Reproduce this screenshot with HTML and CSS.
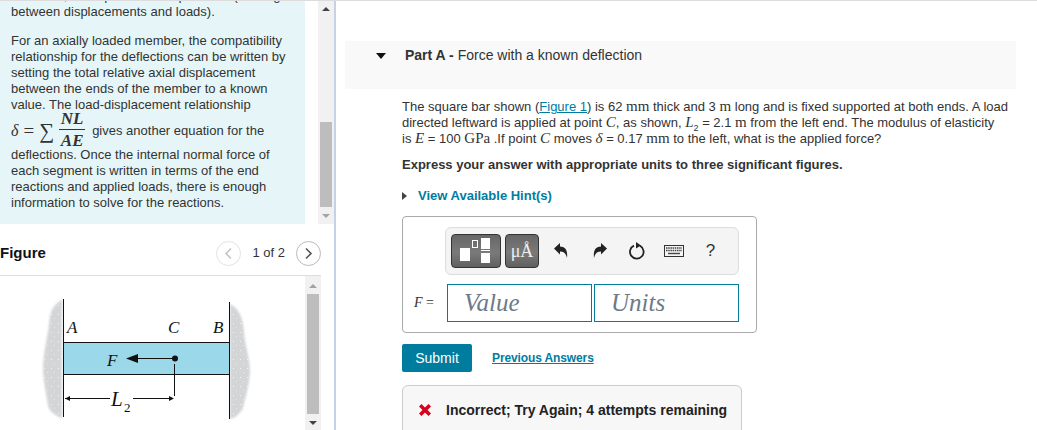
FILE: index.html
```html
<!DOCTYPE html>
<html lang="en">
<head>
  <meta charset="UTF-8">
  <title>Part A - Force with a known deflection</title>
  <link rel="stylesheet" href="styles.css">
</head>
<body>
  <div class="page">
    <div class="left-pane">
      <div class="intro">
        <div class="intro-text">
          <p class="clipped-line">reactions, the equations of equilibrium (relating</p>
          <p>between displacements and loads).</p>
          <p class="gap-above">For an axially loaded member, the compatibility relationship for the deflections can be written by setting the total relative axial displacement between the ends of the member to a known value. The load-displacement relationship</p>
          <div class="formula-line">
            <i class="formula delta">δ</i>
            <span class="formula equals">=</span>
            <span class="formula sigma">∑</span>
            <span class="fraction"><i>NL</i><i class="denominator">AE</i></span>
            <span>gives another equation for the</span>
          </div>
          <p>deflections. Once the internal normal force of each segment is written in terms of the end reactions and applied loads, there is enough information to solve for the reactions.</p>
        </div>
        <div class="scrollbar intro-scroll">
          <span class="arrow-up dark"></span>
          <div class="track"><div class="thumb intro-thumb"></div></div>
          <span class="arrow-down"></span>
        </div>
      </div>

      <div class="figure-head">
        <h2>Figure</h2>
        <div class="pager">
          <span class="round-btn off"><svg width="9" height="13" viewBox="0 0 9 13"><path d="M7 1.500 2 6.500 7 11.500" fill="none" stroke="#c4c4c4" stroke-width="1.600"/></svg></span>
          <span class="pager-text">1 of 2</span>
          <span class="round-btn"><svg width="9" height="13" viewBox="0 0 9 13"><path d="M2 1.500 7 6.500 2 11.500" fill="none" stroke="#555" stroke-width="1.600"/></svg></span>
        </div>
      </div>
      <div class="figure-body">
        <svg class="diagram" width="305" height="154" viewBox="0 0 305 154">
          <defs>
            <pattern id="speck" width="7" height="9" patternUnits="userSpaceOnUse">
              <rect x="2" y="2" width="1" height="1" fill="#f4f4f4"/>
              <rect x="5" y="6" width="1" height="1" fill="#e6e6e6"/>
            </pattern>
          </defs>
          <g class="stone">
            <path d="M62 24 C54 28 50 34 49 48 C48 60 43 76 43 94 C44 112 47 120 48 130 C50 136 56 140 62 142Z" fill="#d3d5d7"/>
            <path d="M230 28 C238 32 243 40 244 56 C245 70 250 82 250 96 C249 112 245 122 243 132 C240 138 235 142 230 143Z" fill="#d3d5d7"/>
          </g>
          <path d="M62 24 C54 28 50 34 49 48 C48 60 43 76 43 94 C44 112 47 120 48 130 C50 136 56 140 62 142Z" fill="url(#speck)"/>
          <path d="M230 28 C238 32 243 40 244 56 C245 70 250 82 250 96 C249 112 245 122 243 132 C240 138 235 142 230 143Z" fill="url(#speck)"/>
          <rect x="63.500" y="66.500" width="166" height="32" fill="#9ad8ea" stroke="#111"/>
          <path d="M63.500 23V141M229.500 26V143" stroke="#111"/>
          <g class="fig-label">
            <text x="67" y="57">A</text>
            <text x="168" y="57">C</text>
            <text x="213" y="57">B</text>
            <text x="107" y="90">F</text>
            <text x="111" y="130" class="big">L</text>
            <text x="124" y="136" class="sub">2</text>
          </g>
          <path d="M135 82.500H175" stroke="#111"/>
          <path d="M126 82.500 138 78V87Z" fill="#111"/>
          <circle cx="175" cy="82.500" r="3" fill="#111"/>
          <path d="M174.500 88V120" stroke="#111"/>
          <path d="M65 122.500H110M133 122.500H173" stroke="#111"/>
          <path d="M65 122.500 70 120V125ZM174 122.500 169 120V125Z" fill="#111"/>
        </svg>
        <div class="scrollbar fig-scroll">
          <span class="arrow-up"></span>
          <div class="track"><div class="thumb fig-thumb"></div></div>
          <span class="arrow-down dark"></span>
        </div>
      </div>
    </div>

    <div class="right-pane">
      <div class="part-head">
        <span class="arrow-down black"></span>
        <span><b>Part A -</b> Force with a known deflection</span>
      </div>
      <div class="part-body">
        <p>The square bar shown (<a href="#">Figure 1</a>) is 62 <span class="unit">mm</span> thick and 3 <span class="unit">m</span> long and is fixed supported at both ends. A load directed leftward is applied at point <i class="var">C</i>, as shown, <i class="var">L</i><sub>2</sub> = 2.1 <span class="unit">m</span> from the left end. The modulus of elasticity <span class="nowrap">is <i class="var">E</i></span> = 100 <span class="unit">GPa</span> .If point <i class="var">C</i> moves <i class="var">δ</i> = 0.17 <span class="unit">mm</span> to the left, what is the applied force?</p>
        <p class="instruction">Express your answer with appropriate units to three significant figures.</p>
        <div class="hints"><span class="arrow-right"></span><a href="#">View Available Hint(s)</a></div>

        <div class="answer-box">
          <div class="toolbar">
            <span class="tool-btn templates">
              <svg width="47" height="32" viewBox="0 0 47 32">
                <rect x="7" y="13" width="10" height="13" fill="#fff"/>
                <rect x="19.500" y="5.500" width="5" height="7" fill="none" stroke="#fff"/>
                <rect x="28" y="3" width="9" height="11" fill="#fff"/>
                <rect x="28" y="15" width="9" height="1" fill="#fff"/>
                <rect x="28" y="18" width="9" height="10" fill="#fff"/>
              </svg>
            </span>
            <span class="tool-btn symbols">μÅ</span>
            <span class="tool-icon">
              <svg width="14" height="16" viewBox="0 0 14 16"><path d="M0 5.500 6 0V3.500C11 3.500 14 7 13 15 12 10.500 10 8.500 6 8.500V11.500Z" fill="#222"/></svg>
            </span>
            <span class="tool-icon redo">
              <svg width="14" height="16" viewBox="0 0 14 16"><path d="M14 5.500 8 0V3.500C3 3.500 0 7 1 15 2 10.500 4 8.500 8 8.500V11.500Z" fill="#222"/></svg>
            </span>
            <span class="tool-icon">
              <svg width="18" height="18" viewBox="0 0 18 18"><path d="M12 3.800A6.800 6.800 0 1 1 6 3.600" fill="none" stroke="#222" stroke-width="1.800"/><path d="M8 0V6.500L13 3.500Z" fill="#222"/></svg>
            </span>
            <span class="tool-icon">
              <svg width="20" height="12" viewBox="0 0 20 12"><rect x=".5" y=".5" width="19" height="11" fill="none" stroke="#333"/><path d="M2 3H18M2 5.500H18" stroke="#444" stroke-dasharray="1.500 .7" stroke-width="1.400"/><path d="M4 8.500H16" stroke="#444" stroke-width="1.400"/></svg>
            </span>
            <span class="tool-icon help">?</span>
          </div>
          <div class="answer-row">
            <span class="answer-label"><i>F</i> =</span>
            <span class="answer-input">Value</span>
            <span class="answer-input">Units</span>
          </div>
        </div>

        <div class="submit-row">
          <button class="submit-btn">Submit</button>
          <a href="#" class="prev-link">Previous Answers</a>
        </div>

        <div class="feedback">
          <svg width="14" height="14" viewBox="0 0 14 14"><path d="M1 3.500 3.500 1 7 4.500 10.500 1 13 3.500 9.500 7 13 10.500 10.500 13 7 9.500 3.500 13 1 10.500 4.500 7Z" fill="#d9001b"/></svg>
          <span>Incorrect; Try Again; 4 attempts remaining</span>
        </div>
      </div>
    </div>
  </div>
</body>
</html>
```

FILE: styles.css
```css
* {
  box-sizing: border-box;
}
html, body {
  margin: 0;
  height: 430px;
  overflow: hidden;
}
body {
  font-family: 'Liberation Sans', Arial, sans-serif;
  font-size: 13px;
  line-height: 16px;
  color: #333;
  background: #fff;
}
p {
  margin: 0;
}
a {
  color: #007c9f;
}
.page {
  display: flex;
  height: 430px;
  border-top: 1px solid #dcdcdc;
}

/* left column */
.left-pane {
  width: 336px;
  flex: none;
  border-right: 2px solid #c5d2e3;
}
.intro {
  display: flex;
  height: 223px;
  overflow: hidden;
}
.intro-text {
  width: 305px;
  height: 223px;
  flex: none;
  padding: 0 11px;
  background: #e6f6f8;
  overflow: hidden;
}
.clipped-line {
  margin-top: -13px;
  white-space: nowrap;
}
.gap-above {
  margin-top: 13px;
}
.formula-line {
  display: flex;
  align-items: center;
  height: 34px;
  padding-top: 2px;
}
.formula {
  font-family: 'Liberation Serif', serif;
  white-space: nowrap;
}
.delta {
  font-size: 16px;
}
.equals {
  margin-left: 5px;
  font-size: 19px;
}
.sigma {
  margin-left: 5px;
  font-size: 21px;
}
.fraction {
  display: flex;
  flex-direction: column;
  align-items: center;
  width: 26px;
  margin: -3px 7px 0 5px;
  font-family: 'Liberation Serif', serif;
  font-weight: bold;
  font-size: 17px;
  line-height: 21px;
}
.denominator {
  border-top: 1px solid #333;
  width: 100%;
  text-align: center;
}
.scrollbar {
  display: flex;
  flex-direction: column;
  align-items: center;
  background: #f1f1f1;
}
.intro-scroll {
  width: 16px;
  margin-left: 13px;
  padding: 6px 0 6px;
}
.track {
  flex: 1;
  width: 100%;
  padding: 0 2px;
}
.thumb {
  background: #bdbdbd;
}
.intro-thumb {
  height: 85px;
  margin-top: 111px;
}
.arrow-up, .arrow-down {
  width: 0;
  height: 0;
  border-left: 4px solid transparent;
  border-right: 4px solid transparent;
}
.arrow-up {
  border-bottom: 4px solid #a3a3a3;
}
.arrow-up.dark {
  border-bottom-color: #444;
}
.arrow-down {
  border-top: 4px solid #a3a3a3;
}
.arrow-down.dark {
  border-top-color: #444;
}
.figure-head {
  display: flex;
  align-items: center;
  justify-content: space-between;
  width: 321px;
  height: 52px;
  padding-top: 7px;
  border-bottom: 1px solid #ddd;
}
.figure-head h2 {
  margin: 0;
  font-size: 15px;
  color: #111;
}
.pager {
  display: flex;
  align-items: center;
  gap: 11px;
}
.round-btn {
  display: flex;
  align-items: center;
  justify-content: center;
  width: 25px;
  height: 25px;
  border: 1px solid #bbb;
  border-radius: 50%;
}
.round-btn.off {
  border-color: #e2e2e2;
}
.figure-body {
  display: flex;
  width: 321px;
  height: 154px;
}
.diagram {
  flex: none;
  display: block;
}
.stone {
  filter: blur(1px);
}
.fig-label text {
  font-family: 'Liberation Serif', serif;
  font-style: italic;
  font-size: 17px;
  fill: #111;
}
.fig-label .big {
  font-size: 21px;
}
.fig-label .sub {
  font-style: normal;
  font-size: 13px;
}
.fig-scroll {
  width: 16px;
  padding: 8px 0 5px;
}
.fig-thumb {
  height: 120px;
  margin-top: 6px;
}

/* right column */
.right-pane {
  flex: 1;
  padding-top: 40px;
}
.part-head {
  display: flex;
  gap: 19px;
  width: 671px;
  height: 48px;
  margin-left: 9px;
  padding: 6px 0 0 31px;
  background: #f9f9f9;
  font-size: 14px;
  color: #333;
}
.arrow-down.black {
  margin-top: 6px;
  border-left-width: 5px;
  border-right-width: 5px;
  border-top: 6px solid #111;
}
.part-body {
  padding: 10px 0 0 66px;
  width: 680px;
}
.unit, .var {
  font-family: 'Liberation Serif', serif;
  font-size: 15px;
  line-height: 0;
}
.nowrap {
  white-space: nowrap;
}
sub {
  font-size: 9px;
  line-height: 0;
}
.instruction {
  margin-top: 10px;
  font-weight: bold;
}
.hints {
  display: flex;
  align-items: center;
  gap: 11px;
  margin-top: 15px;
  font-weight: bold;
}
.hints a {
  text-decoration: none;
}
.arrow-right {
  width: 0;
  height: 0;
  border-top: 4px solid transparent;
  border-bottom: 4px solid transparent;
  border-left: 5px solid #444;
}
.answer-box {
  width: 355px;
  height: 117px;
  margin-top: 12px;
  padding: 10px 16px 0 11px;
  border: 1px solid #aaa;
  border-radius: 4px;
}
.toolbar {
  display: flex;
  align-items: center;
  width: 294px;
  height: 48px;
  margin-left: 31px;
  padding-left: 5px;
  background: #f4f4f4;
  border: 1px solid #ddd;
  border-radius: 6px;
}
.tool-btn {
  display: flex;
  align-items: center;
  justify-content: center;
  height: 34px;
  margin-right: 3px;
  background: linear-gradient(#666, #7a7a7a 55%, #606060);
  border: 1px solid #333;
  border-radius: 4px;
}
.templates {
  width: 50px;
  margin-right: 4px;
}
.symbols {
  width: 34px;
  font-family: 'Liberation Serif', serif;
  font-size: 18px;
  color: #eee;
}
.tool-icon {
  display: flex;
  align-items: center;
  justify-content: center;
  width: 37px;
  height: 34px;
}
.redo {
  margin-left: 2px;
}
.help {
  font-size: 17px;
}
.answer-row {
  display: flex;
  align-items: center;
  gap: 2px;
  margin-top: 9px;
}
.answer-label {
  width: 31px;
  font-size: 14px;
  font-family: 'Liberation Serif', serif;
}
.answer-input {
  width: 145px;
  height: 38px;
  padding: 0 16px;
  border: 1px solid #007c9f;
  font-family: 'Liberation Serif', serif;
  font-style: italic;
  font-size: 25px;
  line-height: 36px;
  color: #6d7a88;
}
.submit-row {
  display: flex;
  align-items: center;
  gap: 20px;
  margin-top: 11px;
}
.submit-btn {
  width: 70px;
  height: 28px;
  border: none;
  border-radius: 2px;
  background: #007c9f;
  color: #fff;
  font-family: inherit;
  font-size: 14px;
}
.prev-link {
  font-size: 12px;
  font-weight: bold;
  letter-spacing: -0.12px;
}
.feedback {
  display: flex;
  align-items: center;
  gap: 14px;
  width: 340px;
  height: 60px;
  margin-top: 13px;
  padding: 0 0 10px 15px;
  background: #f7f7f7;
  border: 1px solid #ccc;
  border-radius: 6px;
  font-size: 14px;
  font-weight: bold;
  color: #222;
}
```
